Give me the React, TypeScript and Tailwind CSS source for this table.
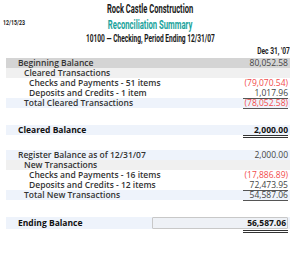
import React from "react";

type Line = "none" | "single" | "double";

type RowProps = {
  label: string;
  indent?: number;
  amount?: string;
  bg?: string;
  strong?: boolean;
  red?: boolean;
  line?: Line;
};

const indents = ["pl-[12px]", "pl-[18px]", "pl-[23px]"];

function Row({ label, indent = 0, amount, bg = "bg-white", strong, red, line = "none" }: RowProps) {
  const lineClass =
    line === "single"
      ? "border-b border-[#555]"
      : line === "double"
      ? "border-b-[3px] border-double border-[#333]"
      : "";
  return (
    <div className={`flex h-[10px] items-start justify-between ${bg}`}>
      <span
        className={`${indents[indent]} whitespace-nowrap leading-[10px] ${
          strong ? "font-bold text-[#111]" : "font-semibold text-[#333]"
        }`}
      >
        {label}
      </span>
      <span
        className={`mr-[2px] w-[45px] whitespace-nowrap text-right leading-[10px] ${lineClass} ${
          red ? "text-[#f24b4b]" : strong ? "font-bold text-[#111]" : "text-[#444]"
        }`}
      >
        {amount}
      </span>
    </div>
  );
}

export default function App() {
  return (
    <div className="h-[256px] w-[300px] overflow-hidden bg-white font-['Open_Sans',sans-serif] text-[8.5px]">
      {/* Header */}
      <div className="relative flex flex-col items-center font-['Roboto',sans-serif] font-bold">
        <span className="absolute left-[3px] top-[18px] inline-block origin-left scale-x-[0.75] text-[7px] text-[#222]">
          12/15/23
        </span>
        <span className="inline-block scale-x-[0.56] whitespace-nowrap text-[13.5px] leading-[16px] text-[#1a1a1a]">
          Rock Castle Construction
        </span>
        <span className="inline-block scale-x-[0.57] whitespace-nowrap text-[13.5px] leading-[16px] text-[#1ba39c]">
          Reconciliation Summary
        </span>
        <span className="inline-block scale-x-[0.6] whitespace-nowrap text-[11px] leading-[13px] text-[#1a1a1a]">
          10100 — Checking, Period Ending 12/31/07
        </span>
      </div>
      <div className="flex h-[13px] justify-end pr-[10px] font-['Roboto',sans-serif] text-[8.5px] font-bold leading-[12px] text-[#222]">
        <span className="inline-block origin-right scale-x-[0.78]">Dec 31, '07</span>
      </div>

      {/* Body */}
      <div className="ml-[6px] mr-[10px]">
        <Row label="Beginning Balance" amount="80,052.58" bg="bg-[#d4d4d4]" />
        <Row label="Cleared Transactions" indent={1} bg="bg-[#f0f0f0]" />
        <Row label="Checks and Payments - 51 items" indent={2} amount="(79,070.54)" red />
        <Row label="Deposits and Credits - 1 item" indent={2} amount="1,017.96" line="single" />
        <Row label="Total Cleared Transactions" indent={1} amount="(78,052.58)" bg="bg-[#eef3fb]" red line="single" />

        <div className="h-[17px]" />
        <Row label="Cleared Balance" amount="2,000.00" bg="bg-[#eef3fb]" strong line="double" />

        <div className="h-[15px]" />
        <Row label="Register Balance as of 12/31/07" amount="2,000.00" bg="bg-[#eef3fb]" />
        <Row label="New Transactions" indent={1} bg="bg-[#f0f0f0]" />
        <Row label="Checks and Payments - 16 items" indent={2} amount="(17,886.89)" red />
        <Row label="Deposits and Credits - 12 items" indent={2} amount="72,473.95" line="single" />
        <Row label="Total New Transactions" indent={1} amount="54,587.06" bg="bg-[#eef3fb]" line="single" />

        <div className="h-[17px]" />
        <div className="flex h-[12px] items-center bg-[#eef3fb]">
          <span className="pl-[12px] font-bold leading-[10px] text-[#111]">Ending Balance</span>
          <div className="ml-auto mr-[2px] flex h-[12px] w-[136px] items-center justify-end rounded-[1px] border border-[#c8c8c8] bg-[#eef1f6] pr-[1px]">
            <span className="font-bold text-[#111]">56,587.06</span>
          </div>
        </div>
        <div className="flex justify-end">
          <div className="mr-[2px] mt-[1px] h-[3px] w-[45px] border-y border-[#333]" />
        </div>
      </div>
    </div>
  );
}
